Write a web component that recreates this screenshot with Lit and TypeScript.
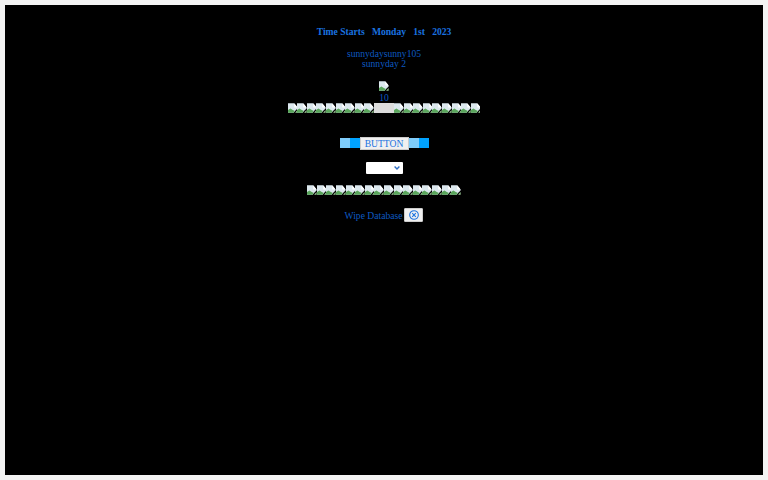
import { LitElement, html, css, svg } from "lit";
import { customElement } from "lit/decorators.js";

const broken = svg`<svg class="ic" viewBox="0 0 10 10" aria-hidden="true">
  <path d="M0 0H6.5L10 4.4V5.6L7.6 7.8L6 10H0Z" fill="#dce8ee"/>
  <path d="M6.5 0L10 4.4H6.5Z" fill="#fff"/>
  <path d="M0 10V7.2L2.5 5.4L5 7.2L7.2 8L5.8 10Z" fill="#5aa65c"/>
  <path d="M7.4 10L10 7V10Z" fill="#9fcf9a"/>
</svg>`;

@customElement("app-root")
export class AppRoot extends LitElement {
  static styles = css`
    :host {
      display: block;
      height: 480px;
      padding: 5px;
      box-sizing: border-box;
      background: #f4f4f4;
      font-family: "Liberation Serif", "Times New Roman", serif;
      font-size: 9.6px;
      line-height: 11px;
      color: #0f62c4;
    }
    .page {
      height: 470px;
      width: 758px;
      background: #000;
      display: flex;
      flex-direction: column;
      align-items: center;
      padding-top: 21px;
      box-sizing: border-box;
    }
    .title {
      font-weight: 700;
      color: #1a73e0;
      white-space: pre;
      height: 11px;
    }
    .users {
      margin-top: 11.5px;
      line-height: 10.5px;
      text-align: center;
      color: #0d5ac0;
    }
    .solo {
      margin-top: 11.5px;
      width: 9.6px;
      height: 10px;
    }
    .ic { display: block; flex: none; width: 9.6px; height: 10px; }
    .num { color: #0d5ac0; height: 11px; margin-top: 1px; }
    .strip { display: flex; align-items: flex-start; height: 10px; }
    .track {
      width: 20px;
      height: 10px;
      background: #dcdcdc;
    }
    .buttons { display: flex; align-items: flex-start; margin-top: 24px; }
    .sw { width: 10px; height: 10px; margin-top: 1px; }
    .light { background: #7fcdfb; }
    .blue { background: #00a2ff; }
    button {
      font: inherit;
      border: 1px solid #ccc;
      background: #f0f0f0;
      color: #1a73e0;
      padding: 0;
    }
    .main { width: 49px; height: 13px; line-height: 11px; }
    .sel {
      position: relative;
      margin-top: 12px;
      width: 37px;
      height: 12px;
    }
    select {
      width: 37px;
      height: 12px;
      font: inherit;
      border: 0;
      border-radius: 1px;
      background: #fff;
      appearance: none;
      display: block;
    }
    .chev {
      position: absolute;
      right: 3px;
      top: 4px;
      width: 6px;
      height: 4px;
      pointer-events: none;
    }
    .strip2 { margin-top: 11px; }
    .wipe {
      margin-top: 13px;
      display: flex;
      align-items: center;
      gap: 2px;
      color: #0d5ac0;
    }
    .x {
      width: 19px;
      height: 14px;
      display: flex;
      align-items: center;
      justify-content: center;
      border-radius: 1px;
    }
  `;

  render() {
    const icons = (n: number) => Array.from({ length: n }, () => broken);
    return html`<div class="page">
      <div class="title">Time Starts   Monday   1st   2023</div>
      <div class="users">sunnydaysunny105<br />sunnyday 2</div>
      <div class="solo">${broken}</div>
      <div class="num">10</div>
      <div class="strip">${icons(9)}<div class="track"></div>${icons(9)}</div>
      <div class="buttons">
        <div class="sw light"></div><div class="sw blue"></div>
        <button class="main">BUTTON</button>
        <div class="sw light"></div><div class="sw blue"></div>
      </div>
      <div class="sel">
        <select aria-label="choice"></select>
        <svg class="chev" viewBox="0 0 6 4" fill="none" stroke="#2f6fc4" stroke-width="1.4"><path d="M0.6 0.6L3 3L5.4 0.6" /></svg>
      </div>
      <div class="strip strip2">${icons(16)}</div>
      <div class="wipe">
        <span>Wipe Database</span>
        <button class="x" aria-label="wipe">
          <svg viewBox="0 0 10 10" width="10" height="10" fill="none" stroke="#1a73e0" stroke-width="1.1">
            <circle cx="5" cy="5" r="4.3" />
            <path d="M3.2 3.2L6.8 6.8M6.8 3.2L3.2 6.8" />
          </svg>
        </button>
      </div>
    </div>`;
  }
}
